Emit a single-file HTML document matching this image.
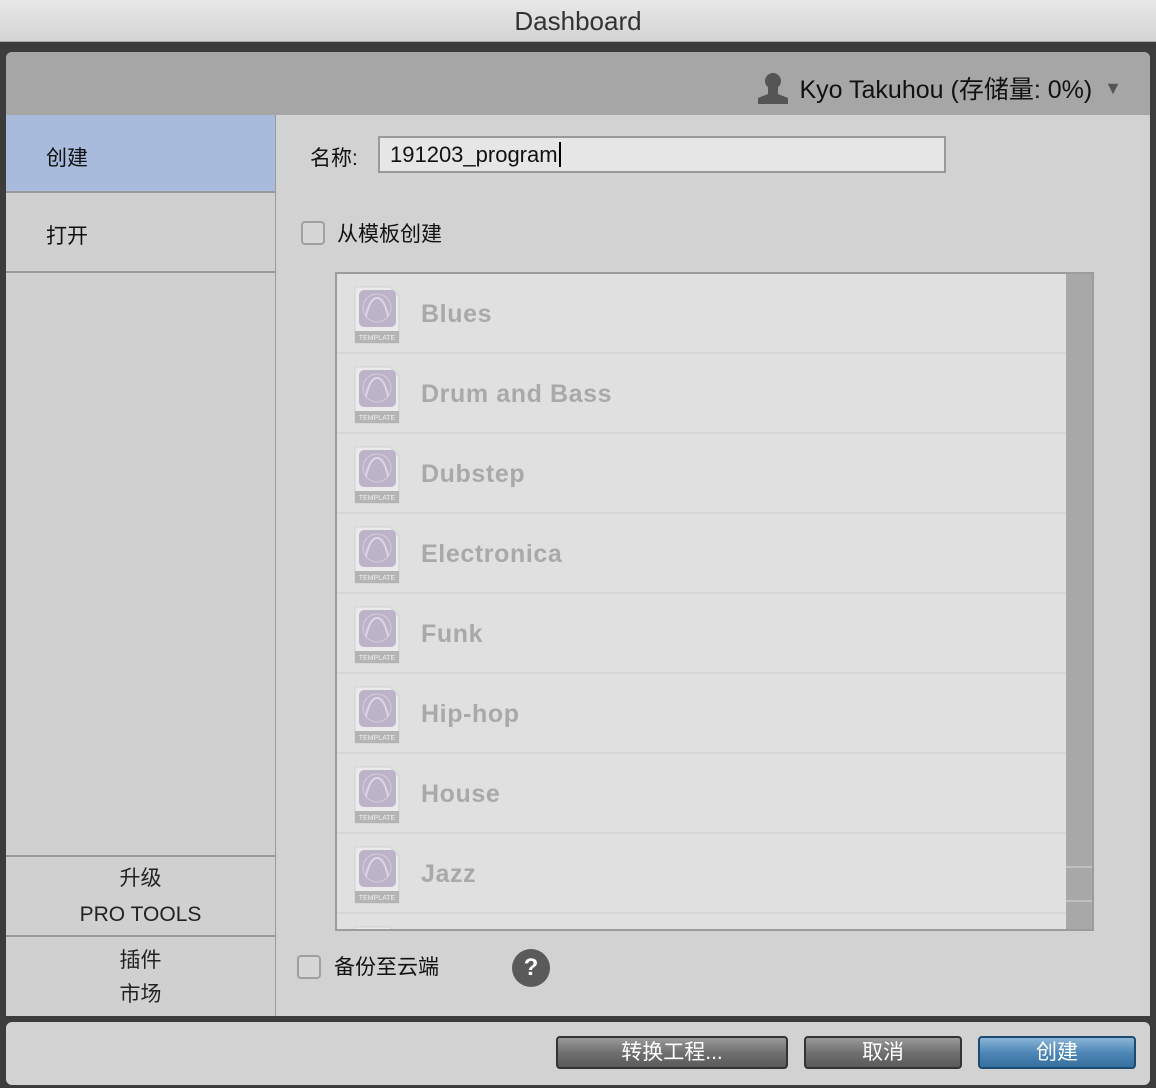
<!DOCTYPE html><html><head><meta charset="utf-8"><style>
*{margin:0;padding:0;box-sizing:border-box}
body{width:1156px;height:1088px;background:#3c3c3c;font-family:"Liberation Sans","Noto Sans CJK SC",sans-serif;position:relative;overflow:hidden}
.t{position:absolute;left:0;top:0;width:1156px;height:42px;background:linear-gradient(#e8e8e8,#d4d4d4);border-bottom:1px solid #aaa;text-align:center;font-size:26px;line-height:42px;color:#333}
.p{position:absolute;left:6px;top:52px;width:1144px;height:964px;background:#d2d2d2;border-radius:6px 6px 0 0;overflow:hidden}
.h{position:absolute;left:0;top:0;width:100%;height:63px;background:#a6a6a6}
.user{position:absolute;right:28px;top:18px;font-size:25px;color:#111;display:flex;align-items:center}
.sb{position:absolute;left:0;top:63px;width:270px;height:901px;border-right:1px solid #999;background:#d0d0d0}
.it{position:absolute;left:0;width:269px;border-bottom:2px solid #9a9a9a;font-size:21px;color:#111}
.box{position:absolute;left:329px;top:220px;width:759px;height:659px;border:2px solid #9c9c9c;background:#e0e0e0;overflow:hidden}
.row{position:absolute;left:0;width:729px;height:80px;border-bottom:2px solid #d6d6d6}
.ic{position:absolute;left:17px;top:12px;width:46px;height:58px}
.row span{position:absolute;left:84px;top:26px;font-size:25px;font-weight:bold;color:#a9a9a9;letter-spacing:0.6px}
.sc{position:absolute;left:729px;top:0;width:28px;height:657px;background:#a8a8a8}
.cb{position:absolute;width:24px;height:24px;border:2px solid #a0a0a0;border-radius:4px;background:#d6d6d6}
.bb{position:absolute;left:6px;top:1022px;width:1144px;height:63px;background:#d2d2d2;border-radius:6px}
.btn{position:absolute;top:1036px;height:33px;border:2px solid #333;border-radius:4px;background:linear-gradient(#9a9a9a,#707070 50%,#5a5a5a);color:#fff;font-size:21px;text-align:center;line-height:29px}
</style></head><body>
<div class="t">Dashboard</div>
<div class="p">
<div class="h"><div class="user"><svg width="34" height="36" viewBox="0 0 34 36" style="margin-right:9px"><circle cx="17" cy="11" r="8" fill="#555"/><path d="M12 17 L12 24 L2 28 L2 34 L32 34 L32 28 L22 24 L22 17Z" fill="#555"/></svg>Kyo Takuhou (存储量: 0%)<span style="color:#555;font-size:18px;margin-left:12px">▼</span></div></div>
<div class="sb">
<div class="it" style="top:0;height:78px;background:#a8bbdc;line-height:88px;padding-left:40px">创建</div>
<div class="it" style="top:78px;height:80px;line-height:88px;padding-left:40px">打开</div>
<div class="it" style="top:740px;height:2px;border-bottom:2px solid #9a9a9a"></div>
<div style="position:absolute;left:0;top:746px;width:269px;text-align:center;font-size:21px;line-height:36px;color:#222">升级<br>PRO TOOLS</div>
<div class="it" style="top:820px;height:2px"></div>
<div style="position:absolute;left:0;top:829px;width:269px;text-align:center;font-size:21px;line-height:34px;color:#222">插件<br>市场</div>
</div>
<div style="position:absolute;left:304px;top:90px;font-size:21px;color:#111">名称:</div>
<div style="position:absolute;left:372px;top:84px;width:568px;height:37px;border:2px solid #999;background:#e6e6e6;font-size:22px;line-height:34px;padding-left:10px;color:#111">191203_program<span style="border-left:2px solid #000;margin-left:1px"></span></div>
<div class="cb" style="left:295px;top:169px"></div>
<div style="position:absolute;left:331px;top:166px;font-size:21px;color:#111">从模板创建</div>
<div class="box">
<div class="sc"><div style="position:absolute;top:592px;left:0;width:28px;height:2px;background:#c0c0c0"></div><div style="position:absolute;top:626px;left:0;width:28px;height:2px;background:#c0c0c0"></div></div>
</div>
<div class="cb" style="left:291px;top:903px"></div>
<div style="position:absolute;left:328px;top:899px;font-size:21px;color:#111">备份至云端</div>
<div style="position:absolute;left:506px;top:897px;width:38px;height:38px;border-radius:50%;background:#5a5a5a;color:#fff;font-weight:bold;font-size:24px;text-align:center;line-height:38px">?</div>
</div>
<div class="bb"></div>
<div class="btn" style="left:556px;width:232px">转换工程...</div>
<div class="btn" style="left:804px;width:158px">取消</div>
<div class="btn" style="left:978px;width:158px;border-color:#1d4a70;background:linear-gradient(#8ab4d6,#4f88b8 50%,#356f9e)">创建</div>
<script>
var names=["Blues","Drum and Bass","Dubstep","Electronica","Funk","Hip-hop","House","Jazz",""];
var box=document.querySelector('.box'),h='';
names.forEach(function(n,i){h+='<div class="row" style="top:'+(i*80)+'px"><svg class="ic" viewBox="0 0 46 58"><path d="M1 1 H36 L45 10 V57 H1Z" fill="#ebebeb" stroke="#d0d0d0"/><rect x="5" y="4" width="37" height="37" rx="5" fill="#bdb3c8"/><circle cx="23" cy="22" r="14" fill="none" stroke="#d4cde0" stroke-width="1"/><path d="M12 30 Q16 12 23 12 Q30 12 34 30" fill="none" stroke="#ddd6e8" stroke-width="2"/><rect x="1" y="45" width="44" height="12" fill="#b4b4b4"/><text x="23" y="54" font-size="7" fill="#eee" text-anchor="middle" font-family="Liberation Sans">TEMPLATE</text></svg><span>'+n+'</span></div>';});
box.insertAdjacentHTML('afterbegin',h);
</script>
</body></html>
